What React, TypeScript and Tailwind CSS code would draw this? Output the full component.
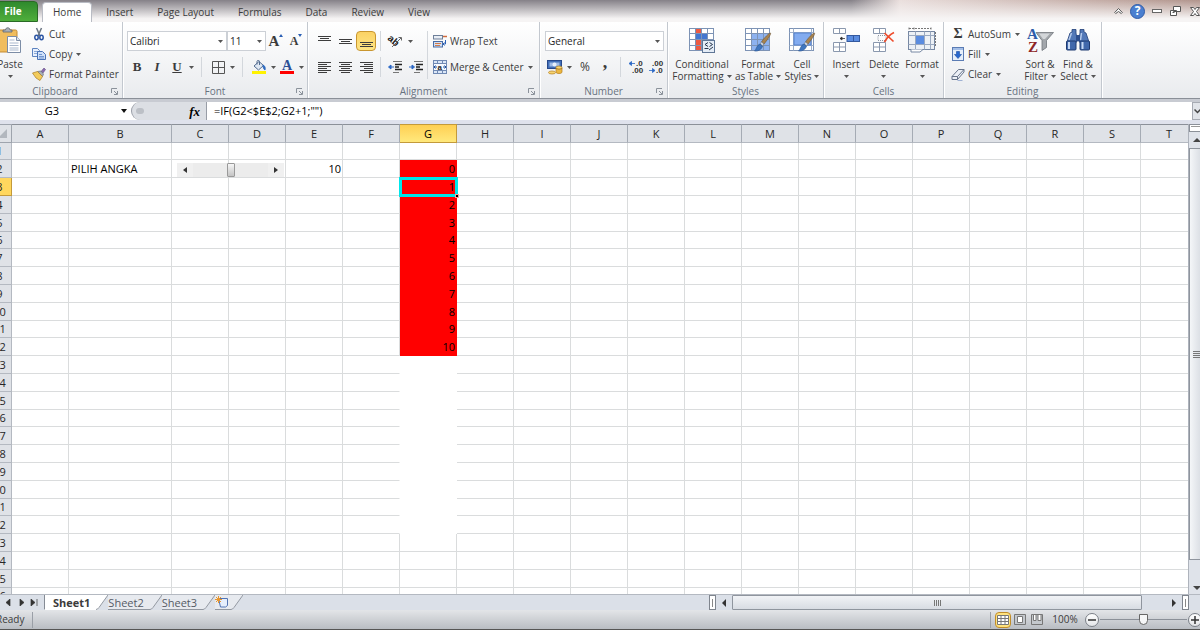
import { useState, type ReactNode } from 'react';
import clsx from 'clsx';

const COLUMNS = 'ABCDEFGHIJKLMNOPQRST'.split('');
const ROWS = Array.from({ length: 26 }, (_, index) => index + 1);
const RIBBON_TABS = ['Home', 'Insert', 'Page Layout', 'Formulas', 'Data', 'Review', 'View'];
const LAST_NUMBER_ROW = 12;
const LAST_FORMATTED_ROW = 22;

interface ChildrenProps {
  children: ReactNode;
}

function Caret() {
  return (
    <svg viewBox="0 0 5 3" className="h-[3px] w-[5px] shrink-0" aria-hidden="true">
      <path d="M0 0h5L2.5 3z" fill="#555" />
    </svg>
  );
}

function Divider({ tall = false }: { tall?: boolean }) {
  return <span className={clsx('block w-px shrink-0 bg-[#d3d7dc]', tall ? 'h-12' : 'h-5')} />;
}

function Group({
  label,
  launcher = false,
  className,
  children,
}: ChildrenProps & { label: string; launcher?: boolean; className: string }) {
  return (
    <section
      aria-label={label}
      className={clsx('flex shrink-0 flex-col border-r border-[#c3c8cf] shadow-[1px_0_0_#fff]', className)}
    >
      <div className="flex h-[62px]">{children}</div>
      <div className="relative h-[14px] text-center leading-[14px] text-[#68727f]">
        {label}
        {launcher && (
          <button type="button" aria-label={`${label} settings`} className="absolute right-1 top-1">
            <svg viewBox="0 0 7 7" className="h-[7px] w-[7px]" fill="none" stroke="#8b929b">
              <path d="M.5 5V.5H6M3 3l3 3M6.5 3v3.5H3" />
            </svg>
          </button>
        )}
      </div>
    </section>
  );
}

function IconButton({
  label,
  active = false,
  children,
}: ChildrenProps & { label: string; active?: boolean }) {
  return (
    <button
      type="button"
      aria-label={label}
      className={clsx(
        'flex h-5 w-5 shrink-0 items-center justify-center',
        active && 'rounded-sm border border-[#c9962f] bg-linear-to-b from-[#fbd264] to-[#fee584]',
      )}
    >
      {children}
    </button>
  );
}

function CaretButton({ label }: { label: string }) {
  return (
    <button type="button" aria-label={label} className="flex h-5 w-2 shrink-0 items-center justify-center">
      <Caret />
    </button>
  );
}

function SmallButton({
  icon,
  label,
  caret = false,
}: {
  icon: ReactNode;
  label: string;
  caret?: boolean;
}) {
  return (
    <button type="button" className="flex h-5 items-center gap-[3px] whitespace-nowrap">
      <span className="flex w-[14px] shrink-0 justify-center">{icon}</span>
      <span>{label}</span>
      {caret && (
        <span className="pl-px">
          <Caret />
        </span>
      )}
    </button>
  );
}

function LargeButton({
  icon,
  lines,
  className,
}: {
  icon: ReactNode;
  lines: [string, string?];
  className: string;
}) {
  return (
    <button
      type="button"
      className={clsx('flex shrink-0 flex-col items-center gap-[5px] whitespace-nowrap pt-[5px]', className)}
    >
      {icon}
      <span className="flex flex-col items-center leading-3">
        <span>{lines[0]}</span>
        <span className="flex h-3 items-center gap-[3px]">
          {lines[1]}
          <Caret />
        </span>
      </span>
    </button>
  );
}

function Select({ label, value, className }: { label: string; value: string; className: string }) {
  return (
    <span className={clsx('relative flex h-5 shrink-0 items-center', className)}>
      <select
        aria-label={label}
        defaultValue={value}
        className="h-5 w-full appearance-none border border-[#ccd0d6] bg-white pl-0.5 text-[10px] text-[#262626] outline-none"
      >
        <option>{value}</option>
      </select>
      <span className="pointer-events-none absolute right-1">
        <Caret />
      </span>
    </span>
  );
}

function PasteIcon() {
  return (
    <svg viewBox="0 0 26 26" className="h-[26px] w-[26px]">
      <rect x="1" y="3" width="19" height="22" rx="1.5" fill="#f0bd5e" stroke="#c48b32" />
      <path d="M6 5V3h2.500c0-3 4.500-3 4.500 0H15v2z" fill="#a9b0b8" stroke="#5e6670" strokeWidth=".8" />
      <path d="M10.500 9.500h9l4 4v12h-13z" fill="#fff" stroke="#7c8da6" />
      <path d="M19.500 9.500v4h4" fill="#dde6f2" stroke="#7c8da6" />
      <path d="M12.500 13h5M12.500 16h9M12.500 18.500h9M12.500 21h9M12.500 23h9" stroke="#a9b8cd" />
    </svg>
  );
}

function CutIcon() {
  return (
    <svg viewBox="0 0 14 14" className="h-[14px] w-[14px]" fill="none">
      <path d="M4.500 1l3.500 8M9.500 1L6 9" stroke="#6b7683" strokeWidth="1.500" />
      <ellipse cx="4.500" cy="10.500" rx="1.700" ry="2.200" stroke="#2953a3" strokeWidth="1.500" />
      <ellipse cx="9.500" cy="10.500" rx="1.700" ry="2.200" stroke="#2953a3" strokeWidth="1.500" />
    </svg>
  );
}

function CopyIcon() {
  return (
    <svg viewBox="0 0 14 14" className="h-[14px] w-[14px]">
      <path d="M.5 1.500h5l2 2v6h-7z" fill="#e8f0fc" stroke="#5d83bf" />
      <path d="M2 4.500h4M2 6.500h4" stroke="#8ba9d8" />
      <path d="M5.500 4.500h5l3 3v5h-8z" fill="#cfe0f8" stroke="#4a74b8" />
      <path d="M7 7.500h3M7 9.500h5M7 11h5" stroke="#7297d1" />
    </svg>
  );
}

function PainterIcon() {
  return (
    <svg viewBox="0 0 14 14" className="h-[14px] w-[14px]">
      <path d="M9 4.500l3-3.500 1.500 1.500L11 6z" fill="#8a6bb0" stroke="#5f4a80" strokeWidth=".6" />
      <path d="M5.500 4.500L9 4l2.500 3-1 2.500z" fill="#a8afb9" stroke="#59616c" strokeWidth=".6" />
      <path d="M.5 6l5-1.500 5 5L8 13.500 4 11z" fill="#f3cc5c" stroke="#ab7c25" strokeWidth=".7" />
    </svg>
  );
}

function BordersIcon() {
  return (
    <svg viewBox="0 0 13 13" className="h-[13px] w-[13px]" fill="none" stroke="#555">
      <path d="M.5.5h12v12H.5zM6.500.5v12M.5 6.500h12" />
    </svg>
  );
}

function FillColorIcon() {
  return (
    <svg viewBox="0 0 14 14" className="h-[14px] w-[14px]">
      <path d="M2 6l5-4.500 4.500 4L6.500 10z" fill="#dfe8f3" stroke="#546d90" />
      <path d="M5 4.500V1.500c0-1.500 2.500-1.500 2.500 0V5" fill="none" stroke="#546d90" />
      <path d="M11 5c2 1 2.500 2.500 2 5-1-.5-2-2-2-5z" fill="#2f6bc0" stroke="#2f6bc0" />
      <path d="M0 11h14v3H0z" fill="#fff200" />
    </svg>
  );
}

type LineAlign = 'left' | 'center' | 'right';

function LinesIcon({ align, rows }: { align: LineAlign; rows: number[] }) {
  return (
    <svg viewBox="0 0 13 13" className="h-[13px] w-[13px]">
      {rows.map((y, index) => {
        const width = index % 2 === 0 ? 13 : 9;
        const x = align === 'left' ? 0 : align === 'right' ? 13 - width : (13 - width) / 2;
        return <rect key={y} x={x} y={y} width={width} height="1" fill="#3d3d3d" />;
      })}
    </svg>
  );
}

function OrientationIcon() {
  return (
    <svg viewBox="0 0 14 14" className="h-[14px] w-[14px] overflow-visible">
      <text x="-1" y="9" fontSize="10" fontWeight="bold" fontFamily="Liberation Sans" fill="#222" transform="rotate(40 4 7)">
        ab
      </text>
      <path d="M4 13l9-9M13.500 3.500h-3M13.500 3.500v3" fill="none" stroke="#666" />
    </svg>
  );
}

function IndentIcon({ increase = false }: { increase?: boolean }) {
  return (
    <svg viewBox="0 0 14 12" className="h-3 w-[14px]">
      <path d="M5 .5h9M5 11.500h6" stroke="#777" />
      <path d="M7 3.500h7M7 6h4M7 8.500h7" stroke="#222" strokeWidth="1.500" />
      <path d={increase ? 'M0 6h3M3 4l2.500 2L3 8z' : 'M3 6h3M3 4L.5 6 3 8z'} fill="#2a67c5" stroke="#2a67c5" />
    </svg>
  );
}

function WrapIcon() {
  return (
    <svg viewBox="0 0 14 14" className="h-[14px] w-[14px]">
      <rect x=".5" y="1.500" width="9" height="3.500" fill="#e9eef5" stroke="#6d7f99" />
      <path d="M10 2.500h4" stroke="#cf6b3c" strokeWidth="1.500" />
      <rect x=".5" y="7.500" width="9" height="5.500" fill="#cfdff5" stroke="#4a6da5" />
      <path d="M2 9.500h6M2 11.500h5" stroke="#d27b4a" />
      <path d="M12.500 6v4h-2.500M11.500 8.500L10 10l1.500 1.500" fill="none" stroke="#2a5fb5" />
    </svg>
  );
}

function MergeIcon() {
  return (
    <svg viewBox="0 0 14 14" className="h-[14px] w-[14px]">
      <rect x=".5" y=".5" width="13" height="13" fill="#dbe7f7" stroke="#7089b3" />
      <path d="M4.500.5v3M9.500.5v3M4.500 10.500v3M9.500 10.500v3M.5 3.500h13M.5 10.500h13" stroke="#7089b3" />
      <rect x="1" y="4" width="12" height="6" fill="#f7fafe" />
      <path d="M1 7h3M13 7h-3M2.500 5.500L1 7l1.500 1.500M11.500 5.500L13 7l-1.500 1.500" fill="none" stroke="#1d4f9e" />
      <text x="4.500" y="9.500" fontSize="8" fontWeight="bold" fontFamily="Liberation Sans" fill="#222">
        a
      </text>
    </svg>
  );
}

function CurrencyIcon() {
  return (
    <svg viewBox="0 0 16 15" className="h-[15px] w-4">
      <rect x=".5" y=".5" width="14" height="8" fill="#426fb8" stroke="#27498b" />
      <rect x="2.500" y="2.500" width="10" height="4" fill="#9ebbe6" />
      <circle cx="7.500" cy="4.500" r="2" fill="#e8f0fb" />
      <ellipse cx="12" cy="7.500" rx="3" ry="1.500" fill="#f7d470" stroke="#b17d1e" strokeWidth=".7" />
      <path d="M9 8v4c0 2 6 2 6 0V8c0 2-6 2-6 0z" fill="#edb840" stroke="#b17d1e" strokeWidth=".7" />
      <ellipse cx="5" cy="12.500" rx="3.500" ry="1.500" fill="#f7d470" stroke="#b17d1e" strokeWidth=".7" />
    </svg>
  );
}

function DecimalIcon({ increase = false }: { increase?: boolean }) {
  return (
    <svg
      viewBox="0 0 14 14"
      className="h-[14px] w-[14px] overflow-visible"
      fontSize="8"
      fontFamily="Liberation Sans"
      fontWeight="bold"
      fill="#333"
    >
      <text x={increase ? 7 : 3} y="6">
        {increase ? '.0' : '.00'}
      </text>
      <text x={increase ? 3 : 7} y="13">
        {increase ? '.00' : '.0'}
      </text>
      <path
        d={increase ? 'M2 3.500h4M2.500 1.500v4L0 3.500z' : 'M0 10.500h4M3.500 8.500v4L6 10.500z'}
        fill="#2a67c5"
        stroke="#2a67c5"
        strokeWidth=".8"
      />
    </svg>
  );
}

function Brush() {
  return (
    <g>
      <path d="M25.500 6c1 1-4 8-6.500 11l-2.500-2C19 11 24 6 25.500 6z" fill="#a8834f" stroke="#6d5838" strokeWidth=".6" />
      <path d="M16.500 15l2.500 2-1.500 2-2.500-2z" fill="#d4d8de" stroke="#6b7480" strokeWidth=".6" />
      <path d="M15 17l2.500 2c-1 4-5 5.500-8 5 2-1.500 2-6 5.500-7z" fill="#3f76bf" stroke="#2b5590" strokeWidth=".6" />
    </g>
  );
}

function ConditionalIcon() {
  return (
    <svg viewBox="0 0 26 26" className="h-[26px] w-[26px]">
      <rect x=".5" y="1.500" width="24" height="22" fill="#fff" stroke="#7d93b5" />
      <rect x="7" y="2" width="6" height="21" fill="#ee5a41" />
      <rect x="7" y="7" width="11" height="5" fill="#4376d0" />
      <path d="M6.500 1.500v22M12.500 1.500v22M18.500 1.500v22M.5 6.500h24M.5 12.500h24M.5 18.500h24" stroke="#7d93b5" />
      <rect x="13.500" y="13.500" width="12" height="12" fill="#e4ecf6" stroke="#5f7696" />
      <path d="M19 15.500l-3 2 3 2M15.500 21.500h4M20.500 15.500l3 2-3 2M20 23l4-3" fill="none" stroke="#26354c" />
    </svg>
  );
}

function FormatTableIcon() {
  return (
    <svg viewBox="0 0 27 26" className="h-[26px] w-[27px]">
      <rect x=".5" y="1.500" width="24" height="22" fill="#fff" stroke="#7d93b5" />
      <rect x="7" y="7" width="17" height="16" fill="#8db2f0" />
      <path d="M6.500 1.500v22M12.500 1.500v22M18.500 1.500v22M.5 6.500h24M.5 12.500h24M.5 18.500h24" stroke="#7d93b5" />
      <Brush />
    </svg>
  );
}

function CellStylesIcon() {
  return (
    <svg viewBox="0 0 27 26" className="h-[26px] w-[27px]">
      <rect x=".5" y="1.500" width="24" height="22" fill="#fff" stroke="#7d93b5" />
      <path d="M4.500 1.500v22M22.500 1.500v22M.5 5.500h24M.5 18.500h24" stroke="#9fb0ca" />
      <rect x="5" y="6" width="17" height="12" fill="#83acf0" stroke="#5681cb" />
      <Brush />
    </svg>
  );
}

function InsertCellsIcon() {
  return (
    <svg viewBox="0 0 27 26" className="h-[26px] w-[27px]">
      <path d="M.5 1.500h12v5H.5zM6.500 1.500v5M.5 15.500h12v9H.5zM6.500 15.500v9M.5 20h12" fill="#fff" stroke="#8a98ae" />
      <rect x="14" y="8.500" width="12.500" height="6" fill="#5a8ce0" stroke="#33599f" />
      <path d="M20.500 8.500v6" stroke="#33599f" />
      <path d="M7 11.500h5M9 10l-2 1.500L9 13z" fill="#333" stroke="#333" strokeWidth=".8" />
    </svg>
  );
}

function DeleteCellsIcon() {
  return (
    <svg viewBox="0 0 26 26" className="h-[26px] w-[26px]">
      <path d="M2.500 1.500h12v5h-12zM8.500 1.500v5M2.500 15.500h12v9h-12zM8.500 15.500v9M2.500 20h12" fill="#fff" stroke="#8a98ae" />
      <path d="M7 8.500h8v5H7z" fill="none" stroke="#8b93a0" strokeDasharray="1 1" />
      <path d="M13.500 6l9 8.500M23 5.500c-4 2-7 5-9.500 9.500" fill="none" stroke="#ee4c2c" strokeWidth="1.700" />
    </svg>
  );
}

function FormatCellsIcon() {
  return (
    <svg viewBox="0 0 28 26" className="h-[26px] w-7">
      <path d="M1 1.500h22M1 .5v2M6 .5v2M23 .5v2M27.500 5v15" fill="none" stroke="#777" strokeDasharray="2 1" />
      <rect x=".5" y="4.500" width="26" height="18" fill="#edf1f6" stroke="#7788a3" />
      <path d="M7.500 4.500v18M16.500 4.500v18M22.500 4.500v18M.5 8.500h26M.5 17.500h26" stroke="#9aa9c0" />
      <rect x="8" y="9" width="8" height="8" fill="#5a8ce0" />
      <path d="M3 22.500v2.500h9l3-2.500" fill="#fff" stroke="#7788a3" />
    </svg>
  );
}

function FillIcon() {
  return (
    <svg viewBox="0 0 12 14" className="h-[14px] w-3">
      <rect x=".5" y=".5" width="11" height="13" fill="#e7effa" stroke="#5b7cb4" />
      <path d="M1 1h10v2H1z" fill="#a4bfe8" />
      <path d="M4.500 4.500h3v3h2L6 11.500 2.500 7.500h2z" fill="#2767cf" stroke="#174a9e" strokeWidth=".6" />
    </svg>
  );
}

function ClearIcon() {
  return (
    <svg viewBox="0 0 14 13" className="h-[13px] w-[14px]">
      <path d="M1 8.500L7.500 1.500h5.500v2.500L6.500 11.500H1z" fill="#edf0f6" stroke="#68758b" />
      <path d="M1 8.500h5.500l6.500-7M6.500 8.500v3" fill="none" stroke="#68758b" />
      <path d="M6.500 12.500h5" stroke="#9fb1d3" />
    </svg>
  );
}

function SortIcon() {
  return (
    <svg viewBox="0 0 26 26" className="h-[26px] w-[26px] overflow-visible" fontFamily="Liberation Serif" fontWeight="bold">
      <path d="M9 5.500h17.500l-7 8v7l-4.500 3v-10z" fill="#a3a7ac" stroke="#71767c" strokeWidth=".8" />
      <path d="M12 6.500h11l-5 5.500h-2z" fill="#d3d6d9" />
      <text x="0" y="12" fontSize="15" fill="#2b5ba8">
        A
      </text>
      <text x="1" y="25" fontSize="15" fill="#8e2626">
        Z
      </text>
    </svg>
  );
}

function FindIcon() {
  return (
    <svg viewBox="0 0 26 26" className="h-[26px] w-[26px]">
      <path d="M5 6l2-1V2.500h4V6l1 6v3H2zM21 6l-2-1V2.500h-4V6l-1 6v3h10z" fill="#5379b8" stroke="#213f77" strokeWidth=".8" />
      <path d="M6.500 6L4 13M16.500 6l-1 7" stroke="#b4caec" strokeWidth="1.500" />
      <path d="M11 8h4v6h-4z" fill="#2e4f8e" />
      <rect x="1.500" y="14" width="9.500" height="9" rx="1" fill="#4168ab" stroke="#1f3a70" />
      <rect x="15" y="14" width="9.500" height="9" rx="1" fill="#4168ab" stroke="#1f3a70" />
      <path d="M4 15v7M17.500 15v7" stroke="#c6d8f3" strokeWidth="2" />
    </svg>
  );
}

function TitleBar() {
  return (
    <header className="h-[22px] shrink-0 bg-linear-to-r from-[#858188] from-71% via-[#eadfdd] via-75% to-[#b0938b]">
      <div className="flex h-full items-end bg-linear-to-b from-white/0 to-[#f6f4f4] to-85%">
        <button
          type="button"
          className="h-[21px] w-[50px] rounded-tr-sm border border-[#2a6a26] bg-linear-to-b from-[#2f8a2d] to-[#4fae3c] font-bold text-white"
        >
          File
        </button>
        <nav className="flex gap-1 pl-1">
          {RIBBON_TABS.map((tab, index) => (
            <button
              key={tab}
              type="button"
              className={clsx(
                'h-5 rounded-t-sm px-2.5',
                index === 0 && 'border-x border-t border-[#b9bcc4] bg-white',
              )}
            >
              {tab}
            </button>
          ))}
        </nav>
        <div className="ml-auto flex h-full items-center">
          <button type="button" aria-label="Minimize the ribbon" className="flex w-[19px] justify-center">
            <svg viewBox="0 0 9 7" className="h-[7px] w-[9px]" fill="#fff" stroke="#555">
              <path d="M.7 4.500l3.800-4 3.800 4-1 1-2.800-2-2.800 2z" />
            </svg>
          </button>
          <button
            type="button"
            aria-label="Help"
            className="mx-[2px] flex h-[15px] w-[15px] items-center justify-center rounded-full border border-[#2f5ca8] bg-[#4a7fd0] text-xs font-bold text-white"
          >
            ?
          </button>
          <button type="button" aria-label="Minimize" className="flex w-[19px] justify-center">
            <span className="h-1 w-[10px] border border-[#666] bg-white" />
          </button>
          <button type="button" aria-label="Restore" className="flex w-[19px] justify-center">
            <svg viewBox="0 0 11 10" className="h-[10px] w-[11px]" fill="#fff" stroke="#555">
              <path d="M3.500.5h7v5h-7zM.5 4.500h6v5h-6zM2.500 6.500h2" />
            </svg>
          </button>
          <button type="button" aria-label="Close" className="flex w-[19px] justify-center">
            <svg viewBox="0 0 10 9" className="h-[9px] w-[10px]" fill="#fff" stroke="#555">
              <path d="M.5.5h3L5 2.500 6.500.5h3l-3 4 3 4h-3L5 6.500l-1.500 2h-3l3-4z" />
            </svg>
          </button>
        </div>
      </div>
    </header>
  );
}

function Ribbon() {
  return (
    <div className="flex h-[77px] shrink-0 border-b border-[#8b9098] bg-linear-to-b from-white to-[#e9ebee]">
      <Group label="Clipboard" launcher className="w-[135px]">
        <LargeButton icon={<PasteIcon />} lines={['Paste']} className="w-11" />
        <div className="flex flex-col pt-0.5">
          <SmallButton icon={<CutIcon />} label="Cut" />
          <SmallButton icon={<CopyIcon />} label="Copy" caret />
          <SmallButton icon={<PainterIcon />} label="Format Painter" />
        </div>
      </Group>

      <Group label="Font" launcher className="w-[185px]">
        <div className="flex flex-col gap-1.5 pl-1 pt-[9px]">
          <div className="flex">
            <Select label="Font" value="Calibri" className="w-[100px]" />
            <Select label="Font size" value="11" className="w-[39px]" />
            <IconButton label="Grow font">
              <span className="font-serif text-[15px] font-bold">A</span>
              <svg viewBox="0 0 4 3" className="mb-3 h-[3px] w-1">
                <path d="M0 3h4L2 0z" fill="#2a5fb5" />
              </svg>
            </IconButton>
            <IconButton label="Shrink font">
              <span className="font-serif text-xs font-bold">A</span>
              <svg viewBox="0 0 4 3" className="mb-3 h-[3px] w-1">
                <path d="M0 0h4L2 3z" fill="#2a5fb5" />
              </svg>
            </IconButton>
          </div>
          <div className="flex items-center font-serif text-[13px] font-bold">
            <IconButton label="Bold">B</IconButton>
            <IconButton label="Italic">
              <i>I</i>
            </IconButton>
            <IconButton label="Underline">
              <u>U</u>
            </IconButton>
            <CaretButton label="Underline styles" />
            <span className="px-1.5">
              <Divider />
            </span>
            <IconButton label="Borders">
              <BordersIcon />
            </IconButton>
            <CaretButton label="Border styles" />
            <span className="px-1.5">
              <Divider />
            </span>
            <IconButton label="Fill color">
              <FillColorIcon />
            </IconButton>
            <CaretButton label="Fill colors" />
            <IconButton label="Font color">
              <span className="border-b-[3px] border-[#f00] px-[2px] text-sm leading-[11px] text-[#2b4f96]">A</span>
            </IconButton>
            <CaretButton label="Font colors" />
          </div>
        </div>
      </Group>

      <Group label="Alignment" launcher className="w-[232px]">
        <div className="flex flex-col gap-1.5 pl-1.5 pt-[9px]">
          <div className="flex items-center gap-px">
            <IconButton label="Top align">
              <LinesIcon align="center" rows={[1, 3, 5]} />
            </IconButton>
            <IconButton label="Middle align">
              <LinesIcon align="center" rows={[4, 6, 8]} />
            </IconButton>
            <IconButton label="Bottom align" active>
              <LinesIcon align="center" rows={[7, 9, 11]} />
            </IconButton>
            <span className="px-[3px]">
              <Divider />
            </span>
            <IconButton label="Orientation">
              <OrientationIcon />
            </IconButton>
            <CaretButton label="Orientation options" />
          </div>
          <div className="flex items-center gap-px">
            <IconButton label="Align left">
              <LinesIcon align="left" rows={[1, 3, 5, 7, 9, 11]} />
            </IconButton>
            <IconButton label="Center">
              <LinesIcon align="center" rows={[1, 3, 5, 7, 9, 11]} />
            </IconButton>
            <IconButton label="Align right">
              <LinesIcon align="right" rows={[1, 3, 5, 7, 9, 11]} />
            </IconButton>
            <span className="px-[3px]">
              <Divider />
            </span>
            <IconButton label="Decrease indent">
              <IndentIcon />
            </IconButton>
            <IconButton label="Increase indent">
              <IndentIcon increase />
            </IconButton>
          </div>
        </div>
        <div className="ml-auto flex gap-[5px] pt-[9px]">
          <Divider tall />
          <div className="flex w-[106px] flex-col gap-1.5">
            <SmallButton icon={<WrapIcon />} label="Wrap Text" />
            <SmallButton icon={<MergeIcon />} label="Merge & Center" caret />
          </div>
        </div>
      </Group>

      <Group label="Number" launcher className="w-32">
        <div className="flex flex-col gap-1.5 pl-[5px] pt-[9px]">
          <Select label="Number format" value="General" className="w-[119px]" />
          <div className="flex items-center">
            <IconButton label="Accounting format">
              <CurrencyIcon />
            </IconButton>
            <CaretButton label="Currencies" />
            <span className="pl-0.5 text-xs">
              <IconButton label="Percent style">%</IconButton>
            </span>
            <IconButton label="Comma style">
              <span className="mb-2.5 font-serif text-lg font-bold leading-none">,</span>
            </IconButton>
            <span className="px-[5px]">
              <Divider />
            </span>
            <IconButton label="Increase decimal">
              <DecimalIcon increase />
            </IconButton>
            <IconButton label="Decrease decimal">
              <DecimalIcon />
            </IconButton>
          </div>
        </div>
      </Group>

      <Group label="Styles" className="w-[156px]">
        <div className="flex pl-1">
          <LargeButton icon={<ConditionalIcon />} lines={['Conditional', 'Formatting']} className="w-[60px]" />
          <LargeButton icon={<FormatTableIcon />} lines={['Format', 'as Table']} className="w-[52px]" />
          <LargeButton icon={<CellStylesIcon />} lines={['Cell', 'Styles']} className="w-9" />
        </div>
      </Group>

      <Group label="Cells" className="w-[120px]">
        <div className="flex pl-[3px]">
          <LargeButton icon={<InsertCellsIcon />} lines={['Insert']} className="w-[38px]" />
          <LargeButton icon={<DeleteCellsIcon />} lines={['Delete']} className="w-[38px]" />
          <LargeButton icon={<FormatCellsIcon />} lines={['Format']} className="w-[38px]" />
        </div>
      </Group>

      <Group label="Editing" className="w-[158px]">
        <div className="flex w-[77px] flex-col pl-[7px] pt-0.5">
          <SmallButton
            icon={<span className="font-serif text-sm font-bold leading-none">Σ</span>}
            label="AutoSum"
            caret
          />
          <SmallButton icon={<FillIcon />} label="Fill" caret />
          <SmallButton icon={<ClearIcon />} label="Clear" caret />
        </div>
        <LargeButton icon={<SortIcon />} lines={['Sort &', 'Filter']} className="w-[38px]" />
        <LargeButton icon={<FindIcon />} lines={['Find &', 'Select']} className="w-[38px]" />
      </Group>
    </div>
  );
}

function FormulaBar() {
  return (
    <div className="flex h-[25px] shrink-0 border-b-4 border-t-[3px] border-b-[#dfe2ec] border-t-[#c8cbd2] bg-white text-[11px] text-black">
      <input
        aria-label="Name box"
        defaultValue="G3"
        className="w-32 min-w-0 bg-transparent text-center outline-none"
      />
      <button type="button" aria-label="Named ranges" className="flex w-[15px] items-center justify-center">
        <svg viewBox="0 0 6 4" className="h-1 w-1.5">
          <path d="M0 0h6L3 4z" fill="#111" />
        </svg>
      </button>
      <div className="flex w-[76px] items-center justify-between rounded-l-full border-l border-r border-[#989da6] bg-[#dcdfe4] pl-1 pr-1.5">
        <span className="h-1.5 w-2 rounded-full bg-[#bcc0c6]" />
        <button type="button" aria-label="Insert function" className="font-serif text-[13px] font-bold italic leading-none">
          fx
        </button>
      </div>
      <input
        aria-label="Formula"
        defaultValue={'=IF(G2<$E$2;G2+1;"")'}
        className="min-w-0 flex-1 bg-white pl-[7px] outline-none"
      />
      <button
        type="button"
        aria-label="Expand formula bar"
        className="flex w-3 items-center border border-[#a7abb3] bg-[#e1e4e9] pl-px"
      >
        <svg viewBox="0 0 7 5" className="h-[5px] w-[7px]" fill="none" stroke="#444" strokeWidth="1.500">
          <path d="M.5.5l3 3 3-3" />
        </svg>
      </button>
    </div>
  );
}

function ScrollControl({ value, onChange }: { value: number; onChange: (value: number) => void }) {
  return (
    <div className="absolute left-[5px] top-[3px] z-10 flex h-[14px] w-[107px] items-center bg-[#f0f0f0]">
      <button
        type="button"
        aria-label="Decrease"
        onClick={() => onChange(Math.max(0, value - 1))}
        className="flex h-full w-4 items-center justify-center"
      >
        <svg viewBox="0 0 4 6" className="h-1.5 w-1">
          <path d="M4 0v6L0 3z" fill="#333" />
        </svg>
      </button>
      <input
        type="range"
        aria-label="Pilih angka"
        min={0}
        max={20}
        value={value}
        onChange={(event) => onChange(Number(event.target.value))}
        className="h-[14px] min-w-0 flex-1 appearance-none bg-[#ececec] outline-none [&::-webkit-slider-thumb]:h-[14px] [&::-webkit-slider-thumb]:w-2 [&::-webkit-slider-thumb]:appearance-none [&::-webkit-slider-thumb]:rounded-[1px] [&::-webkit-slider-thumb]:border [&::-webkit-slider-thumb]:border-[#999] [&::-webkit-slider-thumb]:bg-linear-to-b [&::-webkit-slider-thumb]:from-[#f6f6f6] [&::-webkit-slider-thumb]:to-[#c4c4c4]"
      />
      <button
        type="button"
        aria-label="Increase"
        onClick={() => onChange(Math.min(20, value + 1))}
        className="flex h-full w-4 items-center justify-center"
      >
        <svg viewBox="0 0 4 6" className="h-1.5 w-1">
          <path d="M0 0v6l4-3z" fill="#333" />
        </svg>
      </button>
    </div>
  );
}

function Sheet() {
  const [limit, setLimit] = useState(10);

  function renderCell(column: string, row: number): ReactNode {
    if (column === 'B' && row === 2) {
      return 'PILIH ANGKA';
    }
    if (column === 'C' && row === 2) {
      return <ScrollControl value={limit} onChange={setLimit} />;
    }
    if (column === 'E' && row === 2) {
      return limit;
    }
    if (column === 'G' && row >= 2 && row <= LAST_FORMATTED_ROW && row - 2 <= limit) {
      return row - 2;
    }
    return null;
  }

  function getCellColor(column: string, row: number) {
    const formatted = row >= 2 && row <= LAST_FORMATTED_ROW;

    if (column === 'G' && formatted) {
      return row <= LAST_NUMBER_ROW && row - 2 <= limit ? 'border-[#f00] bg-[#f00]' : 'border-white';
    }
    if (column === 'F' && formatted && row > LAST_NUMBER_ROW) {
      return 'border-b-[#dadcdd] border-r-white';
    }
    return 'border-[#dadcdd]';
  }

  return (
    <div className="min-w-0 flex-1 overflow-hidden">
      <table className="w-[1210px] table-fixed border-separate border-spacing-0 text-[11px] text-black">
        <colgroup>
          <col className="w-6" />
          {COLUMNS.map((column) => (
            <col key={column} className={column === 'B' ? 'w-[103px]' : 'w-[57px]'} />
          ))}
        </colgroup>
        <thead>
          <tr className="h-[19px]">
            <th aria-label="Select all" className="border-b border-r border-t border-[#9ea4ad] bg-[#dfe2e7] p-0">
              <svg viewBox="0 0 9 9" className="ml-auto mr-1 h-[9px] w-[9px]">
                <path d="M9 0v9H0z" fill="#b2b7be" />
              </svg>
            </th>
            {COLUMNS.map((column) => (
              <th
                key={column}
                scope="col"
                className={clsx(
                  'border-b border-r border-t p-0 font-normal leading-4',
                  column === 'G'
                    ? 'border-[#c39a3b] bg-linear-to-b from-[#fecf52] to-[#ffe97c]'
                    : 'border-b-[#b4b9c1] border-r-[#a5abb4] border-t-[#8b9098] bg-[#dfe2e7] text-[#262626]',
                )}
              >
                {column}
              </th>
            ))}
          </tr>
        </thead>
        <tbody>
          {ROWS.map((row) => (
            <tr key={row} className={row % 5 === 1 ? 'h-[17px]' : 'h-[18px]'}>
              <th
                scope="row"
                className={clsx(
                  'border-b border-r p-0 font-normal leading-4 text-[#262626]',
                  row === 3 ? 'border-[#c39a3b] bg-[#ffd75e]' : 'border-[#b4b9c1] bg-[#dfe2e7]',
                )}
              >
                {row}
              </th>
              {COLUMNS.map((column) => (
                <td
                  key={column}
                  className={clsx(
                    'relative border-b border-r py-0 pl-0.5 pr-px leading-4',
                    column !== 'B' && 'text-right',
                    getCellColor(column, row),
                  )}
                >
                  {renderCell(column, row)}
                  {column === 'G' && row === 3 && (
                    <span className="absolute -bottom-[2px] -left-px -right-[2px] -top-px z-10 border-[3px] border-[#00e6ea]">
                      <span className="absolute -bottom-1 -right-1 h-1 w-1 border border-[#f3a3a3] bg-black" />
                    </span>
                  )}
                </td>
              ))}
            </tr>
          ))}
        </tbody>
      </table>
    </div>
  );
}

function VerticalScrollbar() {
  return (
    <div className="flex w-4 shrink-0 flex-col border-l border-[#aeb3bc] bg-[#dfe3ea]">
      <div className="h-2 border border-[#8b9098] bg-white p-px">
        <div className="h-px bg-[#999]" />
      </div>
      <button type="button" aria-label="Scroll up" className="flex h-4 items-center justify-center">
        <svg viewBox="0 0 8 4" className="h-1 w-2">
          <path d="M0 4h8L4 0z" fill="#444" />
        </svg>
      </button>
      <div className="flex flex-1 flex-col items-center justify-center gap-px border border-[#8f959e] bg-linear-to-r from-[#f4f6f8] to-[#d5d9e0]">
        <span className="h-px w-[7px] bg-[#777]" />
        <span className="h-px w-[7px] bg-[#777]" />
        <span className="h-px w-[7px] bg-[#777]" />
        <span className="h-px w-[7px] bg-[#777]" />
      </div>
      <div className="flex h-[34px] items-end justify-center pb-1">
        <button type="button" aria-label="Scroll down">
          <svg viewBox="0 0 8 4" className="h-1 w-2">
            <path d="M0 0h8L4 4z" fill="#444" />
          </svg>
        </button>
      </div>
    </div>
  );
}

function TabEdge({ fill }: { fill: string }) {
  return (
    <svg viewBox="0 0 12 15" className="h-[15px] w-3 shrink-0" aria-hidden="true">
      <path d="M0 0h12L3 13 0 15z" fill={fill} />
      <path d="M12 0L3 12.500Q1.500 14.500 0 14.500" fill="none" stroke="#9298a1" />
    </svg>
  );
}

const NAV_BUTTONS = [
  { label: 'First sheet', path: 'M2 0v7M8 0v7L4 3.500z' },
  { label: 'Previous sheet', path: 'M6 0v7L2 3.500z' },
  { label: 'Next sheet', path: 'M3 0v7l4-3.500z' },
  { label: 'Last sheet', path: 'M1 0v7l4-3.500zM7 0v7' },
];

function SheetTabs() {
  return (
    <div className="flex h-4 shrink-0 border-t border-[#b4b9c1] bg-[#dbe0e8] text-[11px] leading-[13px]">
      <div className="flex pl-px pr-[3px]">
        {NAV_BUTTONS.map(({ label, path }) => (
          <button key={label} type="button" aria-label={label} className="flex w-[13px] items-center justify-center">
            <svg viewBox="0 0 9 7" className="h-[7px] w-[9px]" fill="#333" stroke="#333" strokeWidth=".7">
              <path d={path} />
            </svg>
          </button>
        ))}
      </div>
      <button type="button" className="border-b border-l border-b-white border-l-[#858b94] bg-white pl-2 pr-1.5 font-bold">
        Sheet1
      </button>
      <TabEdge fill="#fff" />
      <button type="button" className="border-b border-[#9298a1] bg-[#e7eaef] pr-1.5 text-[#555b65]">
        Sheet2
      </button>
      <TabEdge fill="#e7eaef" />
      <button type="button" className="border-b border-[#9298a1] bg-[#e7eaef] pr-1.5 text-[#555b65]">
        Sheet3
      </button>
      <TabEdge fill="#e7eaef" />
      <button type="button" aria-label="Insert worksheet" className="border-b border-[#9298a1] bg-[#e7eaef] pr-0.5">
        <svg viewBox="0 0 14 12" className="h-3 w-[14px]">
          <path d="M3.500 2.500h9v7l-2 1.500h-5z" fill="#e5eefc" stroke="#5274b4" />
          <path d="M3.500 0v7M0 3.500h7M1 1l5 5M6 1L1 6" stroke="#e8962d" />
        </svg>
      </button>
      <TabEdge fill="#e7eaef" />

      <div className="ml-auto flex w-[495px] items-stretch">
        <span className="flex w-[7px] shrink-0 items-center justify-center border border-[#7f858e] bg-white">
          <span className="h-2 w-px bg-[#888]" />
        </span>
        <button type="button" aria-label="Scroll left" className="flex w-4 shrink-0 items-center justify-center">
          <svg viewBox="0 0 4 8" className="h-2 w-1">
            <path d="M4 0v8L0 4z" fill="#333" />
          </svg>
        </button>
        <div className="flex flex-1 items-center justify-center gap-px rounded-[1px] border border-[#8f959e] bg-linear-to-b from-[#f1f3f6] to-[#d8dce3]">
          <span className="h-1.5 w-px bg-[#777]" />
          <span className="h-1.5 w-px bg-[#777]" />
          <span className="h-1.5 w-px bg-[#777]" />
          <span className="h-1.5 w-px bg-[#777]" />
        </div>
        <div className="flex w-10 shrink-0 items-center justify-end pr-1.5">
          <button type="button" aria-label="Scroll right">
            <svg viewBox="0 0 4 8" className="h-2 w-1">
              <path d="M0 0v8l4-4z" fill="#333" />
            </svg>
          </button>
        </div>
        <span className="flex w-[7px] shrink-0 items-center justify-center border border-[#7f858e] bg-white">
          <span className="h-2 w-px bg-[#888]" />
        </span>
        <span className="w-[15px] shrink-0" />
      </div>
    </div>
  );
}

function ZoomButton({ label, path }: { label: string; path: string }) {
  return (
    <button
      type="button"
      aria-label={label}
      className="flex h-[14px] w-[14px] shrink-0 items-center justify-center rounded-full border border-[#7b8088] bg-linear-to-b from-white to-[#e3e5e8]"
    >
      <svg viewBox="0 0 8 8" className="h-2 w-2" stroke="#333" strokeWidth="1.500">
        <path d={path} />
      </svg>
    </button>
  );
}

function StatusBar() {
  return (
    <footer className="flex h-5 shrink-0 items-center border-b border-b-[#555] bg-linear-to-b from-[#e3e5e8] to-[#b9bdc3] pl-2 pr-0.5">
      <span className="w-9">Ready</span>
      <span className="h-4 w-px bg-[#9a9fa7]" />
      <div className="ml-auto flex items-center">
        <span className="mr-1 h-4 w-px bg-[#9a9fa7]" />
        <button
          type="button"
          aria-label="Normal view"
          className="flex h-4 w-4 items-center justify-center rounded-sm border border-[#c08c2a] bg-[#ffe27d]"
        >
          <svg viewBox="0 0 12 10" className="h-[10px] w-3" fill="#fff" stroke="#777">
            <path d="M.5.5h11v9H.5zM4 .5v9M8 .5v9M.5 3.500h11M.5 6.500h11" />
          </svg>
        </button>
        <button type="button" aria-label="Page layout view" className="flex w-[17px] items-center justify-center">
          <svg viewBox="0 0 12 11" className="h-[11px] w-3" fill="#c4c8cd" stroke="#777">
            <path d="M.5.5h11v10H.5z" />
            <path d="M3.500 2.500h5v6h-5z" fill="#fff" />
          </svg>
        </button>
        <button type="button" aria-label="Page break preview" className="flex w-[17px] items-center justify-center">
          <svg viewBox="0 0 12 11" className="h-[11px] w-3" fill="#c4c8cd" stroke="#777">
            <path d="M.5.5h11v10H.5z" />
            <path d="M2.500.5h2.500v6H2.500zM7 .5h3v6H7z" fill="#fff" />
          </svg>
        </button>
        <button type="button" className="w-10 text-center">
          100%
        </button>
        <ZoomButton label="Zoom out" path="M0 4h8" />
        <input
          type="range"
          aria-label="Zoom"
          min={10}
          max={190}
          defaultValue={100}
          className="mx-px h-3 w-[87px] appearance-none bg-[linear-gradient(#8b9098,#8b9098)] bg-[length:100%_1px] bg-center bg-no-repeat outline-none [&::-webkit-slider-thumb]:h-[11px] [&::-webkit-slider-thumb]:w-[9px] [&::-webkit-slider-thumb]:appearance-none [&::-webkit-slider-thumb]:rounded-b-full [&::-webkit-slider-thumb]:border [&::-webkit-slider-thumb]:border-[#666] [&::-webkit-slider-thumb]:bg-[#f5f6f7]"
        />
        <ZoomButton label="Zoom in" path="M0 4h8M4 0v8" />
      </div>
    </footer>
  );
}

export default function App() {
  return (
    <div className="h-screen overflow-hidden bg-white">
      <div className="-ml-3 -mr-1 flex h-full flex-col font-['Open_Sans',sans-serif] text-[10px] text-[#3b3b3b] [&_.font-serif]:font-['Liberation_Serif',serif]">
        <TitleBar />
        <Ribbon />
        <FormulaBar />
        <main className="flex min-h-0 flex-1">
          <Sheet />
          <VerticalScrollbar />
        </main>
        <SheetTabs />
        <StatusBar />
      </div>
    </div>
  );
}
